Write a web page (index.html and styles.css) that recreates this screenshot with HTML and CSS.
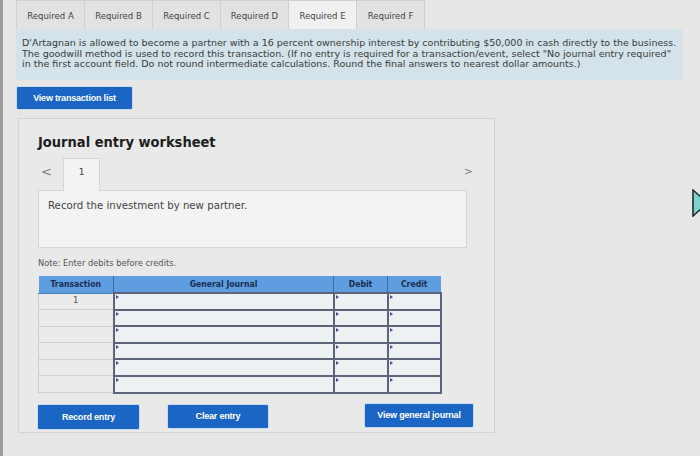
FILE: index.html
```html
<!DOCTYPE html>
<html>
<head>
<meta charset="utf-8">
<link rel="stylesheet" href="styles.css">
</head>
<body>
<div class="page">
  <div class="tabs">
    <div class="tab">Required A</div>
    <div class="tab">Required B</div>
    <div class="tab">Required C</div>
    <div class="tab">Required D</div>
    <div class="tab active">Required E</div>
    <div class="tab">Required F</div>
  </div>
  <div class="info">
    <p>D'Artagnan is allowed to become a partner with a 16 percent ownership interest by contributing $50,000 in cash directly to the business.<br>The goodwill method is used to record this transaction. (If no entry is required for a transaction/event, select "No journal entry required"<br>in the first account field. Do not round intermediate calculations. Round the final answers to nearest dollar amounts.)</p>
  </div>
  <button class="btn btn-list">View transaction list</button>

  <div class="panel">
    <h2 class="title">Journal entry worksheet</h2>
    <div class="nav">
      <span class="arrow">&lt;</span>
      <div class="numtab">1</div>
      <span class="arrow arrow-right">&gt;</span>
    </div>
    <div class="desc">Record the investment by new partner.</div>
    <div class="note">Note: Enter debits before credits.</div>
    <table class="journal">
      <thead>
        <tr>
          <th class="c-tr">Transaction</th>
          <th class="c-gj">General Journal</th>
          <th class="c-dr">Debit</th>
          <th class="c-cr">Credit</th>
        </tr>
      </thead>
      <tbody>
        <tr><td class="tr">1</td><td class="in"><i></i></td><td class="in"><i></i></td><td class="in"><i></i></td></tr>
        <tr><td class="tr"></td><td class="in"><i></i></td><td class="in"><i></i></td><td class="in"><i></i></td></tr>
        <tr><td class="tr"></td><td class="in"><i></i></td><td class="in"><i></i></td><td class="in"><i></i></td></tr>
        <tr><td class="tr"></td><td class="in"><i></i></td><td class="in"><i></i></td><td class="in"><i></i></td></tr>
        <tr><td class="tr"></td><td class="in"><i></i></td><td class="in"><i></i></td><td class="in"><i></i></td></tr>
        <tr><td class="tr"></td><td class="in"><i></i></td><td class="in"><i></i></td><td class="in"><i></i></td></tr>
      </tbody>
    </table>
    <div class="actions">
      <button class="btn btn-record">Record entry</button>
      <button class="btn btn-clear">Clear entry</button>
      <button class="btn btn-view">View general journal</button>
    </div>
  </div>

  <svg class="edge-arrow" width="10" height="28" viewBox="0 0 10 28">
    <polygon points="1,1 10,9 10,19 1,27" fill="#7fd3c8" stroke="#1f2a33" stroke-width="1.6"/>
  </svg>
</div>
</body>
</html>
```

FILE: styles.css
```css
* { box-sizing: border-box; }
html, body { margin: 0; padding: 0; }
body {
  background: #e6e6e5;
  font-family: "DejaVu Sans", sans-serif;
  color: #333;
}
.page {
  position: relative;
  width: 700px;
  height: 456px;
  overflow: hidden;
  border-left: 3px solid #9a9a9a;
  padding-left: 13px;
}
.tabs {
  display: flex;
  height: 29px;
}
.tab {
  width: 69px;
  height: 29px;
  border: 1px solid #cfcfcf;
  border-bottom: none;
  margin-right: -1px;
  background: #e2e2e2;
  font-family: "DejaVu Sans Condensed", "DejaVu Sans", sans-serif;
  font-size: 9.5px;
  color: #444;
  text-align: center;
  padding-top: 9px;
}
.tab.active { background: #f1f1f1; }
.info {
  width: 666px;
  height: 51px;
  background: #d3e3e9;
  padding: 9px 6px 0 6px;
}
.info p {
  margin: 0;
  font-size: 9.5px;
  line-height: 10.6px;
  color: #3a3a3a;
  white-space: nowrap;
}
.btn {
  display: block;
  border: none;
  background: #1b66c4;
  color: #fff;
  font-family: "Liberation Sans", Arial, sans-serif;
  font-weight: bold;
  font-size: 9px;
  letter-spacing: -0.2px;
  border-radius: 1px;
  padding: 0;
  box-shadow: 0 0 0 1px #c9dcef;
}
.btn-list {
  margin: 7px 0 0 1px;
  width: 115px;
  height: 22px;
}
.panel {
  margin: 9px 0 0 2px;
  width: 477px;
  height: 315px;
  background: #e9e9e9;
  border: 1px solid #d3d3d3;
  padding: 0 0 0 19px;
}
.title {
  margin: 14px 0 0 0;
  font-family: "DejaVu Sans Condensed", "DejaVu Sans", sans-serif;
  font-size: 14.5px;
  font-weight: bold;
  color: #1d1d1d;
  line-height: 18px;
}
.nav {
  position: relative;
  display: flex;
  align-items: flex-start;
  height: 32px;
  margin-top: 7px;
  width: 429px;
}
.arrow {
  font-size: 13px;
  color: #7a7a7a;
  margin: 6px 0 0 3px;
  width: 22px;
}
.arrow-right {
  margin-left: auto;
  font-size: 11px;
  width: auto;
  margin-top: 7px;
  margin-right: -6px;
}
.numtab {
  width: 37px;
  height: 33px;
  background: #f3f3f3;
  border: 1px solid #d6d6d6;
  border-bottom: none;
  font-size: 9px;
  text-align: center;
  padding-top: 8px;
  color: #444;
  position: relative;
  z-index: 1;
}
.desc {
  width: 429px;
  height: 58px;
  background: #f3f3f3;
  border: 1px solid #d6d6d6;
  font-size: 10.2px;
  color: #444;
  padding: 9px 9px;
}
.note {
  margin-top: 10px;
  font-size: 8.3px;
  color: #555;
  height: 10px;
}
.journal {
  margin-top: 8px;
  border-collapse: collapse;
  width: 402px;
  table-layout: fixed;
}
.journal th {
  height: 17px;
  background: #5d9de0;
  color: #1b2d52;
  font-family: "DejaVu Sans Condensed", "DejaVu Sans", sans-serif;
  font-size: 8.6px;
  font-weight: bold;
  padding: 0;
  border-left: 1px solid #3c6aa5;
  border-bottom: 1px solid #4a7fbe;
}
.journal th:first-child { border-left: none; }
.c-tr { width: 75px; }
.c-gj { width: 220px; }
.c-dr { width: 54px; }
.c-cr { width: 53px; }
.journal td {
  height: 16.6px;
  padding: 0;
}
.journal td.tr {
  background: #ebebeb;
  border: 1px solid #cfcfcf;
  font-size: 8.5px;
  color: #555;
  text-align: center;
  vertical-align: top;
  padding-top: 1px;
}
.journal td.in {
  position: relative;
  background: #eef1f4;
  border: 2px solid #5c6479;
}
.journal td.in i {
  position: absolute;
  left: 1px;
  top: 1px;
  width: 0;
  height: 0;
  border-left: 3px solid #3b5588;
  border-top: 2px solid transparent;
  border-bottom: 2px solid transparent;
}
.actions {
  display: flex;
  margin-top: 11px;
}
.btn-record { width: 101px; height: 24px; }
.btn-clear { width: 100px; height: 23px; margin-left: 29px; }
.btn-view { width: 108px; height: 23px; margin-left: 97px; margin-top: -1px; }
.edge-arrow {
  position: absolute;
  left: 689px;
  top: 189px;
}
```
